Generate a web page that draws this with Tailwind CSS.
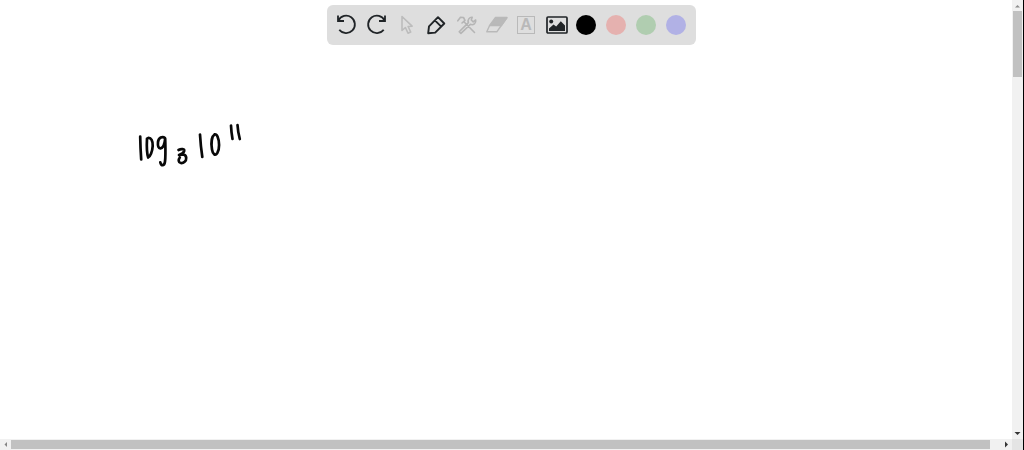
<!DOCTYPE html>
<html lang="en">
<head>
<meta charset="utf-8">
<meta name="viewport" content="width=device-width, initial-scale=1">
<title>Whiteboard</title>
<script src="https://cdn.jsdelivr.net/npm/@tailwindcss/browser@4"></script>
</head>
<body class="bg-white font-['Liberation_Sans',sans-serif]">
<div class="grid h-screen grid-cols-[1fr_11px_1px] grid-rows-[1fr_11px] overflow-hidden">
  <main id="board" class="min-w-0 overflow-hidden">
    <header class="flex justify-center pt-[5px] pl-[11px]">
      <div role="toolbar" aria-label="Drawing tools" class="flex h-10 items-center rounded-md bg-[#dedede] pr-[5px] pl-[4px] text-[#202427]">
        <button aria-label="Undo" class="grid h-10 w-[30px] place-items-center">
          <svg class="size-6" viewBox="-1 0 24 24" fill="none" stroke="currentColor" stroke-width="1.8"><path d="M3.400 7.500A8.700 8.700 0 1 1 4.300 16.800M3 2.500v5.500h6"/></svg>
        </button>
        <button aria-label="Redo" class="grid h-10 w-[30px] place-items-center">
          <svg class="size-6" viewBox="-2 0 24 24" fill="none" stroke="currentColor" stroke-width="1.8"><path d="M18.600 7.500A8.700 8.700 0 1 0 17.700 16.800M19 2.500v5.500h-6"/></svg>
        </button>
        <button aria-label="Select" class="grid h-10 w-[30px] place-items-center text-[#bcbcbc]">
          <svg class="size-6" viewBox="-1 0 24 24" fill="none" stroke="currentColor" stroke-width="1.6" stroke-linejoin="round"><path d="M7 3.500v14l3.400-3 2.600 5.700 2.700-1.200-2.600-5.500 4-.3z"/></svg>
        </button>
        <button aria-label="Pen" class="grid h-10 w-[30px] place-items-center">
          <svg class="size-6" viewBox="0 0 24 24" fill="none" stroke="currentColor" stroke-width="1.9" stroke-linejoin="round"><path d="M4.2 20.2 5 13.300 14 4.200 20.300 10.500 11.200 19.600zM10.900 7.300l6.300 6.300"/></svg>
        </button>
        <button aria-label="Tools" class="grid h-10 w-[30px] place-items-center text-[#b5b5b5]">
          <svg class="size-6" viewBox="-1 0 24 24" fill="none" stroke="currentColor" stroke-width="1.6" stroke-linecap="round" stroke-linejoin="round"><path d="M2.800 7.800 5.500 4.300l3 .2 1.500 2.800-3 2.700M8.700 8.500l10.800 11M17.200 4.300a3.800 3.800 0 0 0-3.800 5.300L4.200 18.700l1.700 1.700 9.500-9.100a3.800 3.800 0 0 0 5.300-4.300l-2.500 1.900-1.900-1.900z"/></svg>
        </button>
        <button aria-label="Eraser" class="grid h-10 w-[30px] place-items-center text-[#b9b9b9]">
          <svg class="size-6" viewBox="-1 0 24 24" fill="none" stroke="currentColor" stroke-width="1.4" stroke-linejoin="round"><path fill="currentColor" d="M10.500 4.500H22l-5.700 8H4.600z"/><path d="m4.600 12.500-2.800 6.300h10l4.500-6.300 5.700-8"/></svg>
        </button>
        <button aria-label="Text" class="grid h-10 w-[30px] place-items-center text-[#b9b9b9]">
          <span class="grid size-[18px] place-items-center border border-current text-base leading-none font-bold">A</span>
        </button>
        <button aria-label="Image" class="grid h-10 w-[30px] place-items-center">
          <svg class="size-6" viewBox="-1 0 24 24" fill="none"><rect x="2" y="4" width="20" height="16" rx="1" stroke="currentColor" stroke-width="1.7"/><circle cx="6.2" cy="8.4" r="2" fill="currentColor"/><path fill="currentColor" d="M4 18v-2.500l4.500-4 2.700 2 4.600-5.200 4.200 4.300V18z"/></svg>
        </button>
        <button aria-label="Black" class="grid h-10 w-[30px] place-items-center"><span class="size-5 rounded-full bg-black"></span></button>
        <button aria-label="Red" class="grid h-10 w-[30px] place-items-center"><span class="size-5 rounded-full bg-[#e5b1af]"></span></button>
        <button aria-label="Green" class="grid h-10 w-[30px] place-items-center"><span class="size-5 rounded-full bg-[#b0cdb0]"></span></button>
        <button aria-label="Blue" class="grid h-10 w-[30px] place-items-center"><span class="size-5 rounded-full bg-[#b1b1e5]"></span></button>
      </div>
    </header>
    <!-- Freehand pen strokes -->
    <section aria-label="Canvas" class="pt-[70px] pl-[130px]">
      <svg role="img" aria-label="log base 3 of 10 to the 11" class="h-[60px] w-[120px]" viewBox="130 115 120 60" fill="none" stroke="#080808" stroke-width="2.7" stroke-linecap="round" stroke-linejoin="round">
        <path d="M140.200 136.500q.2 12 1 23"/>
        <path d="M147 138.500c-.4 8-.2 15 1.200 19 2-.6 4.200-6 4.500-11.500.2-5-1.500-8.500-4.700-8"/>
        <path d="M165 138c-2.500-2-6.500-.5-7 4-.4 4 .5 6.500 2.500 6.300 2.500-.3 4.200-5 4.700-9.800.2 9 .6 17-.2 23-.6 4.500-3.500 5-4.700.8"/>
        <path d="M178.500 150c3-1.500 6-1 5.700 1-.4 1.800-2.500 3-5.200 4 4-1 7-.4 7.200 2.800.2 3.500-2.600 5.500-5.400 5.200-2.600-.5-2.600-3.500-1-5.500"/>
        <path d="M200 134.500q.7 12 2.300 22.500"/>
        <path d="M214.500 134.500c-3 2-3.500 9-2.500 15 .8 5 3.300 6.500 5.300 3.500 2.500-4 2.200-12 .2-16.500-.8-1.700-2-2.500-3-2"/>
        <path d="M231 125.500q.3 7 1.500 13.500M237.500 125q.5 7.500 2.300 14"/>
      </svg>
    </section>
  </main>
  <div role="scrollbar" aria-label="Vertical scroll" aria-controls="board" aria-orientation="vertical" aria-valuenow="0" class="flex flex-col items-center bg-[#f1f1f1]">
    <svg class="h-[11px] w-[11px]" viewBox="0 0 11 11"><path fill="#8c8c8c" d="M3 7.500 5.500 5 8 7.500z"/></svg>
    <div class="h-[15%] w-[9px] bg-[#c1c1c1]"></div>
    <svg class="mt-auto h-[11px] w-[11px]" viewBox="0 0 11 11"><path fill="#353535" d="M2.500 4 5.500 7 8.500 4z"/></svg>
  </div>
  <div class="row-span-2 bg-black"></div>
  <div role="scrollbar" aria-label="Horizontal scroll" aria-controls="board" aria-orientation="horizontal" aria-valuenow="0" class="flex items-center bg-[#f1f1f1]">
    <svg class="h-[11px] w-[11px] shrink-0" viewBox="0 0 11 11"><path fill="#858585" d="M7 3 4.500 5.500 7 8z"/></svg>
    <div class="h-[9px] grow bg-[#c1c1c1]"></div>
    <svg class="ml-[11px] h-[11px] w-[11px] shrink-0" viewBox="0 0 11 11"><path fill="#353535" d="M4 2.500 7 5.500 4 8.500z"/></svg>
  </div>
  <div class="bg-[#e4e4e4]"></div>
</div>
</body>
</html>
